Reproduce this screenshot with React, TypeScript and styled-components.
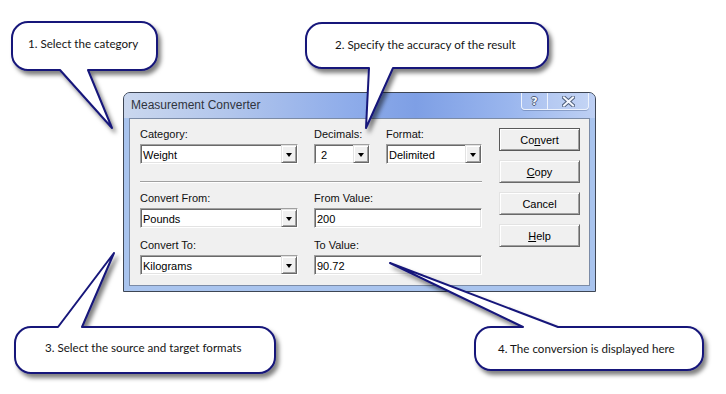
import React from 'react';
import styled, { createGlobalStyle } from 'styled-components';

const GlobalStyle = createGlobalStyle`
  html, body { margin: 0; padding: 0; background: #fff; }
  body { font-family: "Liberation Sans", Arial, sans-serif; }
`;

const Page = styled.div`
  position: relative;
  width: 726px;
  height: 394px;
  overflow: hidden;
  background: #fff;
  box-sizing: border-box;
  padding: 92px 0 0 123px;
`;

const Dialog = styled.div`
  width: 473px;
  box-sizing: border-box;
  border: 1px solid #3e4654;
  border-radius: 7px 7px 0 0;
  background: #a9c4ee;
`;

const TitleBar = styled.div`
  height: 25px;
  display: flex;
  align-items: flex-start;
  justify-content: space-between;
  padding-left: 7px;
  border-radius: 6px 6px 0 0;
  background: linear-gradient(90deg, #cad7ee 0%, #b2c6ec 22%, #8eacea 48%, #7e9fe5 62%, #9ab6ee 82%, #bed0f4 100%);
`;

const Title = styled.div`
  padding-top: 5px;
  font-size: 12px;
  line-height: 14px;
  color: #30343e;
`;

const CaptionGroup = styled.div`
  display: flex;
  margin-right: 6px;
  border: 1px solid #eef3fc;
  border-top: none;
  border-radius: 0 0 4px 4px;
  box-shadow: 0 1px 0 rgba(60, 80, 120, 0.35);
  overflow: hidden;
`;

const CaptionButton = styled.div<{ $w: number }>`
  width: ${p => p.$w}px;
  height: 16px;
  display: flex;
  align-items: center;
  justify-content: center;
  background: rgba(255, 255, 255, 0.12);
  & + & { border-left: 1px solid #eef3fc; }
  font-family: "DejaVu Sans", sans-serif;
  font-weight: bold;
  font-size: 11px;
  color: #f4f7fd;
  text-shadow: 1px 0 0 #52627e, -1px 0 0 #52627e, 0 1px 0 #52627e, 0 -1px 0 #52627e;
`;

const Body = styled.div`
  padding: 0 5px 5px;
`;

const Client = styled.div`
  display: flex;
  align-items: flex-start;
  background: #f0f0f0;
  border: 1px solid #7b8ba6;
  padding: 9px 8px 10px 10px;
`;

const Fields = styled.div`
  width: 342px;
  display: flex;
  flex-direction: column;
`;

const Row = styled.div<{ $cols: string; $top?: number }>`
  display: grid;
  grid-template-columns: ${p => p.$cols};
  column-gap: 16px;
  margin-top: ${p => p.$top ?? 0}px;
`;

const Field = styled.div`
  display: flex;
  flex-direction: column;
  gap: 3px;
`;

const Label = styled.div`
  font-size: 11px;
  line-height: 13px;
  color: #111;
`;

const Sunken = styled.div`
  height: 20px;
  box-sizing: border-box;
  display: flex;
  align-items: stretch;
  background: #fff;
  border: 1px solid;
  border-color: #a0a0a0 #fff #fff #a0a0a0;
  box-shadow: inset 1px 1px 0 #696969, inset -1px -1px 0 #e3e3e3;
  font-size: 11px;
  color: #000;
`;

const Value = styled.span<{ $indent?: number }>`
  flex: 1;
  display: flex;
  align-items: center;
  padding-left: ${p => p.$indent ?? 2}px;
  padding-top: 1px;
`;

const DropButton = styled.span`
  width: 16px;
  box-sizing: border-box;
  display: flex;
  align-items: center;
  justify-content: center;
  background: #f0f0f0;
  border: 1px solid;
  border-color: #e3e3e3 #696969 #696969 #e3e3e3;
  box-shadow: inset 1px 1px 0 #fff, inset -1px -1px 0 #a0a0a0;
`;

const Arrow = styled.span`
  width: 0;
  height: 0;
  border-left: 3.5px solid transparent;
  border-right: 3.5px solid transparent;
  border-top: 4px solid #000;
  margin-top: 1px;
`;

const Divider = styled.div`
  height: 1px;
  margin: 17px 0 9px;
  background: #a0a0a0;
  border-bottom: 1px solid #fff;
`;

const Buttons = styled.div`
  margin-left: 17px;
  display: flex;
  flex-direction: column;
  gap: 9px;
`;

const PushButton = styled.div<{ $default?: boolean }>`
  width: 81px;
  height: 23px;
  box-sizing: border-box;
  display: flex;
  align-items: center;
  justify-content: center;
  font-size: 11px;
  color: #000;
  background: #f0f0f0;
  border: 1px solid;
  border-color: ${p => (p.$default ? '#5a5a5a' : '#e3e3e3 #696969 #696969 #e3e3e3')};
  box-shadow: inset 1px 1px 0 #fff, inset -1px -1px 0 #a0a0a0;
  u { text-decoration: underline; text-underline-offset: 1px; }
`;

const Overlay = styled.svg`
  position: absolute;
  left: 0;
  top: 0;
  pointer-events: none;
`;

const Note = styled.div<{ $x: number; $y: number }>`
  position: absolute;
  left: ${p => p.$x}px;
  top: ${p => p.$y}px;
  font-family: Lato, "Open Sans", sans-serif;
  font-size: 11.6px;
  line-height: 16px;
  color: #151515;
  white-space: nowrap;
`;

type Tail = { edge: 'top' | 'bottom'; a: number; b: number; tx: number; ty: number };

const balloon = (x: number, y: number, w: number, h: number, r: number, t: Tail) => {
  const R = x + w;
  const B = y + h;
  const k = r * 0.45;
  let d = `M${x + r},${y} `;
  if (t.edge === 'top') d += `L${t.a},${y} L${t.tx},${t.ty} L${t.b},${y} `;
  d += `L${R - r},${y} C${R - k},${y} ${R},${y + k} ${R},${y + r} `;
  d += `L${R},${B - r} C${R},${B - k} ${R - k},${B} ${R - r},${B} `;
  if (t.edge === 'bottom') d += `L${t.b},${B} L${t.tx},${t.ty} L${t.a},${B} `;
  d += `L${x + r},${B} C${x + k},${B} ${x},${B - k} ${x},${B - r} `;
  d += `L${x},${y + r} C${x},${y + k} ${x + k},${y} ${x + r},${y} Z`;
  return d;
};

const callouts = [
  { d: balloon(12, 22, 145, 48, 16, { edge: 'bottom', a: 60, b: 88, tx: 112, ty: 128 }), text: '1. Select the category', x: 28, y: 36 },
  { d: balloon(306, 23, 242, 45, 16, { edge: 'bottom', a: 369, b: 393, tx: 366, ty: 128 }), text: '2. Specify the accuracy of the result', x: 335, y: 37 },
  { d: balloon(15, 327, 260, 46, 16, { edge: 'top', a: 58, b: 82, tx: 114, ty: 253 }), text: '3. Select the source and target formats', x: 45, y: 340 },
  { d: balloon(475, 327, 228, 43, 16, { edge: 'top', a: 523, b: 558, tx: 390, ty: 263 }), text: '4. The conversion is displayed here', x: 498, y: 341 },
];

const CloseGlyph = () => (
  <svg width="13" height="11" viewBox="0 0 13 11">
    <path d="M2 1.5 L11 9.5 M11 1.5 L2 9.5" stroke="#52627e" strokeWidth="4" strokeLinecap="square" />
    <path d="M2 1.5 L11 9.5 M11 1.5 L2 9.5" stroke="#f4f7fd" strokeWidth="2" strokeLinecap="square" />
  </svg>
);

const Combo = ({ value, indent }: { value: string; indent?: number }) => (
  <Sunken>
    <Value $indent={indent}>{value}</Value>
    <DropButton><Arrow /></DropButton>
  </Sunken>
);

const TextBox = ({ value }: { value: string }) => (
  <Sunken>
    <Value>{value}</Value>
  </Sunken>
);

const App = () => {
  return (
    <>
      <GlobalStyle />
      <Page>
        <Dialog>
          <TitleBar>
            <Title>Measurement Converter</Title>
            <CaptionGroup>
              <CaptionButton $w={25}>?</CaptionButton>
              <CaptionButton $w={40}><CloseGlyph /></CaptionButton>
            </CaptionGroup>
          </TitleBar>
          <Body>
            <Client>
              <Fields>
                <Row $cols="158px 56px 96px">
                  <Field><Label>Category:</Label><Combo value="Weight" /></Field>
                  <Field><Label>Decimals:</Label><Combo value="2" indent={6} /></Field>
                  <Field><Label>Format:</Label><Combo value="Delimited" /></Field>
                </Row>
                <Divider />
                <Row $cols="158px 1fr">
                  <Field><Label>Convert From:</Label><Combo value="Pounds" /></Field>
                  <Field><Label>From Value:</Label><TextBox value="200" /></Field>
                </Row>
                <Row $cols="158px 1fr" $top={11}>
                  <Field><Label>Convert To:</Label><Combo value="Kilograms" /></Field>
                  <Field><Label>To Value:</Label><TextBox value="90.72" /></Field>
                </Row>
              </Fields>
              <Buttons>
                <PushButton $default>Co<u>n</u>vert</PushButton>
                <PushButton><u>C</u>opy</PushButton>
                <PushButton>Cancel</PushButton>
                <PushButton><u>H</u>elp</PushButton>
              </Buttons>
            </Client>
          </Body>
        </Dialog>
        <Overlay width="726" height="394" viewBox="0 0 726 394">
          <defs>
            <filter id="shade" x="-10%" y="-10%" width="130%" height="140%">
              <feDropShadow dx="3" dy="4" stdDeviation="2" floodColor="#000" floodOpacity="0.5" />
            </filter>
          </defs>
          {callouts.map((c, i) => (
            <path key={i} d={c.d} fill="#fff" stroke="#16167a" strokeWidth="2" strokeLinejoin="round" filter="url(#shade)" />
          ))}
        </Overlay>
        {callouts.map((c, i) => (
          <Note key={i} $x={c.x} $y={c.y}>{c.text}</Note>
        ))}
      </Page>
    </>
  );
};

export default App;
